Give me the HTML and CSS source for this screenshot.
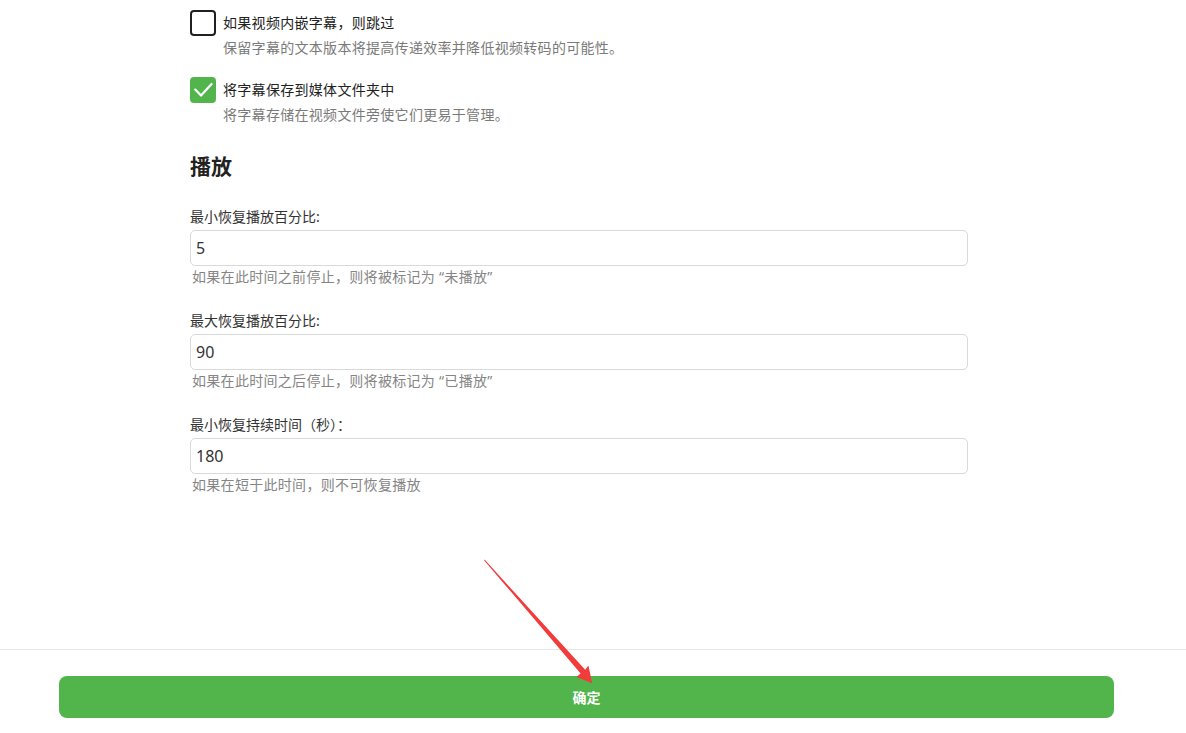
FILE: index.html
```html
<!DOCTYPE html>
<html lang="zh-CN">
<head>
<meta charset="utf-8">
<title>播放设置</title>
<link rel="stylesheet" href="styles.css">
</head>
<body>
<div class="page">
  <main class="content">
    <div class="check-item">
      <div class="check-row">
        <span class="box"></span>
        <span class="check-label">如果视频内嵌字幕，则跳过</span>
      </div>
      <div class="check-desc">保留字幕的文本版本将提高传递效率并降低视频转码的可能性。</div>
    </div>
    <div class="check-item">
      <div class="check-row">
        <span class="box box-on">
          <svg width="26" height="26" viewBox="0 0 26 26"><path d="M5.2 12.6 L11 18.6 L21.6 7" fill="none" stroke="#fff" stroke-width="2.2" stroke-linecap="round" stroke-linejoin="round"/></svg>
        </span>
        <span class="check-label">将字幕保存到媒体文件夹中</span>
      </div>
      <div class="check-desc">将字幕存储在视频文件旁使它们更易于管理。</div>
    </div>

    <h2 class="section-title">播放</h2>

    <div class="field">
      <label class="field-label">最小恢复播放百分比:</label>
      <div class="input">5</div>
      <div class="hint">如果在此时间之前停止，则将被标记为 “未播放”</div>
    </div>
    <div class="field">
      <label class="field-label">最大恢复播放百分比:</label>
      <div class="input">90</div>
      <div class="hint">如果在此时间之后停止，则将被标记为 “已播放”</div>
    </div>
    <div class="field">
      <label class="field-label">最小恢复持续时间（秒）：</label>
      <div class="input">180</div>
      <div class="hint">如果在短于此时间，则不可恢复播放</div>
    </div>
  </main>
  <footer class="footer">
    <button class="ok">确定</button>
  </footer>
</div>
<svg class="arrow" width="1186" height="733" viewBox="0 0 1186 733">
  <polygon points="484.6,559.6 585.2,669.8 588.4,665.6 592.2,683.2 576.4,677 580.6,673.6 484.2,560.4" fill="#f23c3c"/>
</svg>
</body>
</html>
```
FILE: styles.css
```css
html, body {
  margin: 0;
  padding: 0;
  background: #fff;
}
body {
  font-family: "Noto Sans", "Noto Sans CJK SC", sans-serif;
  color: #222;
  position: relative;
}
.page {
  height: 733px;
  display: flex;
  flex-direction: column;
}
.content {
  flex: 1;
  padding: 10px 0 0 190px;
  width: 778px;
}
.check-item {
  margin-bottom: 19px;
}
.check-row {
  display: flex;
  align-items: center;
  gap: 7px;
}
.box {
  width: 22px;
  height: 22px;
  border: 2px solid #1f1f1f;
  border-radius: 4px;
  flex: none;
  position: relative;
}
.box-on {
  background: #52b54b;
  border-color: #52b54b;
}
.box-on svg {
  position: absolute;
  left: -2px;
  top: -2px;
}
.check-label {
  font-size: 14px;
  line-height: 26px;
  color: #222;
  letter-spacing: 0.3px;
}
.check-desc {
  margin: 2px 0 0 33px;
  font-size: 14px;
  line-height: 20px;
  color: #7a7a7a;
  letter-spacing: 0.3px;
}
.section-title {
  margin: 26px 0 26px;
  font-size: 21px;
  line-height: 30px;
  font-weight: 700;
  color: #222;
}
.field {
  margin-bottom: 24px;
}
.field-label {
  display: block;
  font-size: 14px;
  line-height: 20px;
  color: #333;
  margin-bottom: 3px;
}
.input {
  box-sizing: border-box;
  height: 36px;
  border: 1px solid #d9d9d9;
  border-radius: 5px;
  padding: 0 5px;
  font-size: 16px;
  line-height: 34px;
  color: #333;
}
.hint {
  margin: 1px 0 0 2px;
  font-size: 14px;
  line-height: 20px;
  color: #858585;
  letter-spacing: 0.3px;
}
.footer {
  border-top: 1px solid #e6e6e6;
  padding: 26px 72px 15px 59px;
}
.ok {
  display: block;
  width: 100%;
  height: 42px;
  border: none;
  border-radius: 8px;
  background: #52b54b;
  color: #fff;
  font-family: "Noto Sans CJK SC", sans-serif;
  font-size: 14px;
  font-weight: 700;
}
.arrow {
  position: absolute;
  left: 0;
  top: 0;
  pointer-events: none;
}
```
